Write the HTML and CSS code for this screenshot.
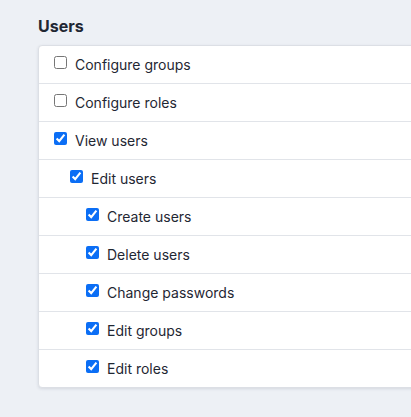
FILE: index.html
```html
<!DOCTYPE html>
<html>
	<head>
		<meta charset="utf-8" />
		<title>Users</title>
		<link rel="stylesheet" href="styles.css">
	</head>
	<body>
		<div class="container">
			<h3 class="title">Users</h3>
			<div class="card">
				<label class="row"><input type="checkbox" /><span>Configure groups</span></label>
				<label class="row"><input type="checkbox" /><span>Configure roles</span></label>
				<label class="row"><input type="checkbox" checked /><span>View users</span></label>
				<label class="row lv1"><input type="checkbox" checked /><span>Edit users</span></label>
				<label class="row lv2"><input type="checkbox" checked /><span>Create users</span></label>
				<label class="row lv2"><input type="checkbox" checked /><span>Delete users</span></label>
				<label class="row lv2"><input type="checkbox" checked /><span>Change passwords</span></label>
				<label class="row lv2"><input type="checkbox" checked /><span>Edit groups</span></label>
				<label class="row lv2"><input type="checkbox" checked /><span>Edit roles</span></label>
			</div>
		</div>
	</body>
</html>
```

FILE: styles.css
```css
html, body {
	margin: 0;
	background-color: #edf0f5;
}
body {
	font-family: Inter, "Liberation Sans", sans-serif;
	color: #1f2733;
}
.container {
	padding: 16px 0 0 38px;
	overflow: hidden;
}
.title {
	margin: 0 0 9px;
	font-size: 16px;
	line-height: 20px;
	font-weight: 700;
	color: #1f2733;
}
/* card runs past the right edge of the window */
.card {
	margin-right: -20px;
	margin-bottom: 4px;
	background-color: #fff;
	border: 1px solid #dcdfe5;
	border-radius: 4px;
	box-shadow: 0 1px 3px rgba(40, 50, 70, .12);
}
.row {
	display: flex;
	align-items: center;
	height: 37px;
	padding-left: 15px;
	font-size: 14px;
	border-bottom: 1px solid #e1e4e9;
}
.row:last-child {
	border-bottom: none;
}
.row input {
	width: 13px;
	height: 13px;
	margin: 0 8px 5px 0;
	accent-color: #0b6ef5;
}
.lv1 {
	padding-left: 31px;
}
.lv2 {
	padding-left: 47px;
}
```
